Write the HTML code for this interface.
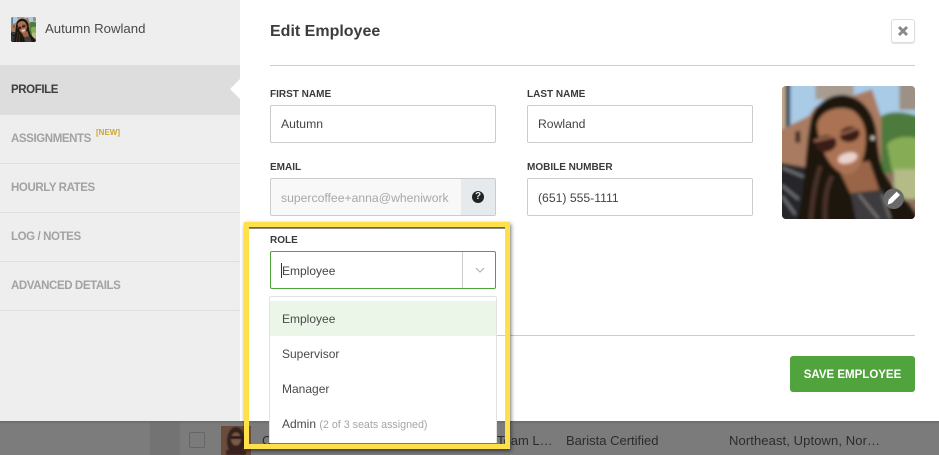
<!DOCTYPE html>
<html><head><meta charset="utf-8">
<style>
html,body{margin:0;padding:0;background:#7b7b7b}
#p{position:relative;width:939px;height:455px;overflow:hidden;font-family:"Liberation Sans",sans-serif;color:#3f3f3f;background:#7b7b7b}
#p div,#p span.a,#p svg{position:absolute}
.t{white-space:nowrap;line-height:16px}
.nav{left:11px;font-size:11.5px;font-weight:bold;color:#a2a2a2;letter-spacing:-.4px}
.hr{left:0;width:240px;height:1px;background:#dfdfdf}
.lab{font-size:10px;font-weight:bold;color:#3a3a3a}
.inp{box-sizing:border-box;border:1px solid #ccc;border-radius:2px;background:#fff;height:38px}
.v{font-size:12.2px;color:#444}
.opt{font-size:12px;color:#4a4a4a;left:282px}
</style></head><body><div id="p">
<!-- backdrop row -->
<div style="left:0;top:421px;width:150px;height:34px;background:#7c7c7c"></div>
<div style="left:150px;top:421px;width:30px;height:34px;background:#737373"></div>
<div style="left:180px;top:421px;width:759px;height:34px;background:#7b7b7b"></div>
<div style="left:0;top:421px;width:939px;height:3px;background:linear-gradient(#6a6a6a,rgba(123,123,123,0))"></div>
<div style="left:189px;top:432px;width:14px;height:14px;border:1px solid #666;border-radius:2px"></div>
<svg style="left:221px;top:426px" width="30" height="29" viewBox="0 0 30 29"><defs><filter id="c"><feGaussianBlur stdDeviation=".7"/></filter></defs><rect width="30" height="29" fill="#6b4c3c"/><g filter="url(#c)"><ellipse cx="15" cy="15" rx="9" ry="14" fill="#35211e"/><ellipse cx="15" cy="13" rx="5" ry="6.5" fill="#7d5845"/><rect x="10" y="10" width="10" height="3" fill="#1d1515"/><rect x="5" y="24" width="20" height="5" fill="#3a2224"/></g></svg>
<div class="t" style="left:262px;top:433px;font-size:13px;color:#2c2c2c">C</div>
<div class="t" style="left:497px;top:433px;font-size:13px;color:#2c2c2c">Team L…</div>
<div class="t" style="left:566px;top:433px;font-size:13px;color:#2c2c2c">Barista Certified</div>
<div class="t" style="left:729px;top:433px;font-size:13px;color:#2c2c2c;letter-spacing:.1px">Northeast, Uptown, Nor…</div>

<!-- sidebar -->
<div style="left:0;top:0;width:240px;height:421px;background:#eee"></div>
<div style="left:240px;top:0;width:699px;height:421px;background:#fff"></div>
<svg style="left:11px;top:17px;border-radius:2px" width="25" height="25" viewBox="0 0 399 399"><use href="#ph"/></svg>
<div class="t" style="left:45px;top:21px;font-size:13.2px;color:#4a4a4a">Autumn Rowland</div>
<div style="left:0;top:65px;width:240px;height:50px;background:#ddd"></div>
<svg style="left:230px;top:79px" width="10" height="20"><path d="M10 0V20L0 10Z" fill="#fff"/></svg>
<div class="t nav" style="top:82px;color:#3d3d3d">PROFILE</div>
<div class="t nav" style="top:131px">ASSIGNMENTS</div>
<div class="t" style="left:96px;top:125px;font-size:8px;font-weight:bold;color:#cfa631">[NEW]</div>
<div class="hr" style="top:163px"></div>
<div class="t nav" style="top:180px">HOURLY RATES</div>
<div class="hr" style="top:212px"></div>
<div class="t nav" style="top:229px">LOG / NOTES</div>
<div class="hr" style="top:261px"></div>
<div class="t nav" style="top:278px">ADVANCED DETAILS</div>
<div class="hr" style="top:310px"></div>

<!-- header -->
<div class="t" style="left:270px;top:24px;font-size:16px;font-weight:bold;color:#3c3c3c">Edit Employee</div>
<div style="left:891px;top:19px;width:22px;height:22px;border:1px solid #ddd;border-radius:3px;box-shadow:0 1px 1px #e2e2e2"></div>
<svg style="left:897px;top:25px" width="12" height="12" viewBox="0 0 12 12"><path d="M2 2L10 10M10 2L2 10" stroke="#8a8a8a" stroke-width="3"/></svg>
<div style="left:270px;top:65px;width:645px;height:1px;background:#ccc"></div>

<!-- fields -->
<div class="t lab" style="left:270px;top:87px">FIRST NAME</div>
<div class="inp" style="left:270px;top:105px;width:226px"></div>
<div class="t v" style="left:281px;top:116px">Autumn</div>
<div class="t lab" style="left:527px;top:87px">LAST NAME</div>
<div class="inp" style="left:527px;top:105px;width:226px"></div>
<div class="t v" style="left:538px;top:116px">Rowland</div>
<div class="t lab" style="left:270px;top:160px">EMAIL</div>
<div class="inp" style="left:270px;top:178px;width:226px;background:#f8f8f8"></div>
<div style="left:461px;top:179px;width:34px;height:36px;background:#e7eaec"></div>
<div class="t" style="left:281px;top:190px;font-size:12.2px;color:#a8a8a8;width:178px;overflow:hidden">supercoffee+anna@wheniwork</div>
<div style="left:472px;top:191px;width:12px;height:12px;border-radius:50%;background:#222;color:#e7eaec;font-size:10px;font-weight:bold;line-height:12px;text-align:center">?</div>
<div class="t lab" style="left:527px;top:160px">MOBILE NUMBER</div>
<div class="inp" style="left:527px;top:178px;width:226px"></div>
<div class="t v" style="left:538px;top:190px">(651) 555-1111</div>

<!-- photo -->
<svg style="left:782px;top:86px;border-radius:4px" width="133" height="133" viewBox="0 0 399 399">
<defs><filter id="b" x="0" y="0" width="100%" height="100%"><feGaussianBlur stdDeviation="5"/></filter>
<g id="ph"><rect width="399" height="399" fill="#8d6f5e"/>
<g filter="url(#b)">
<rect x="-20" y="-20" width="440" height="150" fill="#a9cbe6"/>
<rect x="-20" y="-20" width="31" height="150" fill="#c2a888"/>
<rect x="11" y="-20" width="14" height="145" fill="#34485c"/>
<rect x="100" y="-20" width="115" height="60" fill="#a89c90"/>
<rect x="352" y="-20" width="67" height="92" fill="#9d9084"/>
<path d="M-20 140L80 90 100 62 215 28 270 10 300 100 310 260H-20Z" fill="#a97c62"/>
<rect x="40" y="135" width="15" height="35" fill="#3e2f28"/>
<path d="M298 90Q340 65 420 95V260H298Z" fill="#4e7a3c"/>
<path d="M315 175Q350 140 420 160V255H330Z" fill="#86ad55"/>
<rect x="335" y="250" width="85" height="90" fill="#b4bb86"/>
<path d="M-20 228L75 245 75 420H-20Z" fill="#26272c"/>
<path d="M0 245L65 272M0 298L50 340M0 330L40 385" stroke="#777a7e" stroke-width="7"/>
<path d="M42 420C70 320 68 200 85 110 95 50 150 20 195 28 250 40 280 90 285 150 290 220 300 270 340 310 370 340 395 370 420 420Z" fill="#1f130f"/>
<path d="M165 240L262 225 292 312 205 322Z" fill="#9a6547"/>
<path d="M205 322L300 310 328 420H226Z" fill="#3c3a3c"/>
<path d="M105 120C110 70 180 55 215 75 245 100 255 130 250 180 245 230 225 265 190 265 150 255 115 200 105 120Z" fill="#ab7352"/>
<ellipse cx="132" cy="173" rx="32" ry="25" transform="rotate(-15 132 173)" fill="#3a1a15"/>
<ellipse cx="203" cy="145" rx="31" ry="23" transform="rotate(-12 203 145)" fill="#3a1a15"/>
<path d="M96 165L160 150 240 122" fill="none" stroke="#a86f58" stroke-width="6"/>
<ellipse cx="197" cy="216" rx="30" ry="16" transform="rotate(-15 197 216)" fill="#ecd2cc"/>
<path d="M85 420C90 340 100 290 115 240M130 420C125 340 135 300 150 270" fill="none" stroke="#4a3329" stroke-width="14"/>
<path d="M230 325L290 399M300 325L325 399" stroke="#a9a5a0" stroke-width="3"/>
<circle cx="272" cy="156" r="6" fill="#d8d2c8"/>
</g></g></defs>
<use href="#ph"/>
<circle cx="335" cy="338" r="31" fill="#6a6a6a"/>
<path d="M317 356L320 341 344 317 354 327 330 351Z" fill="#fff"/>
</svg>

<!-- bottom divider + button -->
<div style="left:270px;top:335px;width:645px;height:1px;background:#ccc"></div>
<div style="left:790px;top:356px;width:125px;height:36px;background:#51a33d;border-radius:3px"></div>
<div class="t" style="left:790px;top:367px;width:125px;text-align:center;font-size:11.5px;font-weight:bold;color:#fff">SAVE EMPLOYEE</div>

<!-- highlight -->
<div style="box-sizing:border-box;left:244px;top:222px;width:266px;height:227px;border:5px solid #fde04a;box-shadow:1px 2px 4px rgba(0,0,0,.55)"></div>
<div style="left:249px;top:227px;width:256px;height:2px;background:linear-gradient(#55524a,#9a9a96)"></div>
<div class="t lab" style="left:270px;top:233px">ROLE</div>
<div class="inp" style="left:270px;top:251px;width:226px;border-color:#4fa33b"></div>
<div style="left:462px;top:252px;width:1px;height:36px;background:#ccc"></div>
<svg style="left:475px;top:267px" width="10" height="7"><path d="M1 1L5 5 9 1" fill="none" stroke="#aaa" stroke-width="1"/></svg>
<div style="left:281px;top:263px;width:1px;height:15px;background:#333"></div>
<div class="t v" style="left:282px;top:263px;font-size:12px">Employee</div>
<div style="box-sizing:border-box;left:269px;top:296px;width:228px;height:147px;background:#fff;border:1px solid #e2e2e2;border-bottom:0;border-radius:2px 2px 0 0"></div>
<div style="left:270px;top:301px;width:226px;height:35px;background:#ebf6e8"></div>
<div class="t opt" style="top:311px">Employee</div>
<div class="t opt" style="top:346px">Supervisor</div>
<div class="t opt" style="top:381px">Manager</div>
<div class="t opt" style="top:416px">Admin <span style="font-size:10.7px;color:#a5a5a5">(2 of 3 seats assigned)</span></div>
</div></body></html>
